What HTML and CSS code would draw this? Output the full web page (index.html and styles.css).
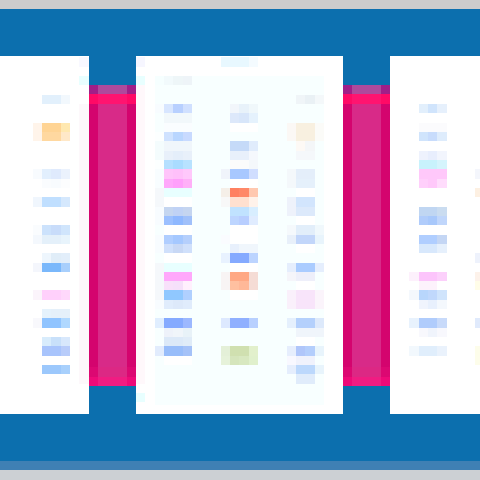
FILE: index.html
```html
<!DOCTYPE html>
<html lang="en">
<head>
    <meta charset="UTF-8">
    <title>Sheets</title>
    <link rel="stylesheet" href="styles.css">
    <script src="sheets.js"></script>
</head>
<body>
    <div class="top-bar"></div>
    <div class="stage">
        <div class="panel panel-left" data-panel="left"></div>

        <div class="gutter">
            <div class="stripe stripe-purple"></div>
            <div class="stripe stripe-hot"></div>
            <div class="stripe stripe-magenta"></div>
            <div class="stripe stripe-fade"></div>
            <div class="stripe stripe-pink"></div>
        </div>

        <div class="panel panel-center" data-panel="center"></div>

        <div class="gutter gutter-right">
            <div class="stripe stripe-purple"></div>
            <div class="stripe stripe-hot"></div>
            <div class="stripe stripe-magenta"></div>
            <div class="stripe stripe-fade"></div>
            <div class="stripe stripe-pink"></div>
        </div>

        <div class="panel panel-right" data-panel="right"></div>
    </div>
    <div class="bottom-line"></div>
    <div class="bottom-bar"></div>
</body>
</html>
```

FILE: styles.css
```css
:root {
    --cell: 9.333px;
    --blue: #0c6fae;
}
html, body {
    height: 100%;
}
body {
    margin: 0;
    display: flex;
    flex-direction: column;
    overflow: hidden;
    background-color: var(--blue);
}

.top-bar {
    height: var(--cell);
    background-color: #cccccc;
}
.bottom-line {
    height: var(--cell);
    background-color: #3f80b4;
}
.bottom-bar {
    height: 10px;
    background-color: #ccd0d4;
}

.stage {
    flex: 1;
    display: flex;
    padding: 46.667px 0 46.667px;
    min-height: 0;
}

.panel {
    display: flex;
    flex-shrink: 0;
    padding-top: 1.3px;
    background-color: #ffffff;
    overflow: hidden;
}
.panel-left {
    width: 88.7px;
    padding-left: 32.7px;
    box-sizing: border-box;
}
.panel-center {
    width: 207.3px;
    box-sizing: border-box;
}
.panel-right {
    flex: 1;
    padding-left: 19.3px;
    box-sizing: border-box;
}

.column {
    display: grid;
    grid-template-columns: repeat(4, var(--cell));
    grid-auto-rows: var(--cell);
    flex-shrink: 0;
}
.column-edge {
    grid-template-columns: var(--cell);
}
.panel-left .column-edge {
    margin-left: auto;
}
.panel-right .column-edge {
    margin-left: 28.3px;
}

.sheet-wrap {
    margin-left: var(--cell);
}
.sheet-head {
    padding-left: 66px;
    height: calc(var(--cell) * 2);
}
.sheet {
    display: flex;
    gap: 28.667px;
    width: 169.333px;
    height: 329px;
    background-color: #f8ffff;
}

.gutter {
    flex: 0 0 47.3px;
    display: flex;
    flex-direction: column;
    padding: 28.9px 0 28px;
}
.gutter-right {
    flex: 0 0 46.7px;
}

.stripe {
    --side: #d4046e;
    --mid: #d82a88;
    height: var(--cell);
    background: linear-gradient(90deg,
        var(--side) var(--cell),
        var(--mid) var(--cell),
        var(--mid) calc(100% - var(--cell)),
        var(--side) calc(100% - var(--cell)));
}
.stripe-purple {
    --side: #a01f88;
    --mid: #ae4a9c;
}
.stripe-hot {
    --side: #ff0a66;
    --mid: #ff1470;
}
.stripe-magenta {
    flex: 1;
}
.stripe-fade {
    --side: #dc0872;
    --mid: #dc2884;
}
.stripe-pink {
    --side: #ee0a78;
    --mid: #f01c82;
}
```

FILE: sheets.js
```js
// rows are keyed from the first row under the panel top, cells are hex colours, "." is blank
const FIRST_ROW = -5;
const LAST_ROW = 31;

const SHEETS = {
    left: {
        columns: [{
            '-1': '. e2f0fc e2f0fc f2f8fd',
            2: 'fff4ea ffd494 ffd494 ffe8b0',
            3: 'fff4ea ffd8a0 ffd8a0 ffe8c8',
            7: 'f8fbfe e2effd dfeafd ebf2fd',
            8: '. fafcfe f8fbfe fcfdfe',
            10: 'f0f6fd c0dfff c0dfff d5e8fd',
            13: 'fafcfe cce2fc c8dcfa d0e5fc',
            14: 'f4f8fd e4f0fa e4f0fa e8f4fc',
            16: '. eef6fd e0edf8 e2eefa',
            17: 'f4f6fc 7ab8fb 7ab8fb a8cffc',
            20: 'fbf4fb ffd0fb ffd0fb ffd8fb',
            22: '. e5f2fc e5f0fa e5f0fa',
            23: 'f8f8fc 90c4ff 90c4ff b0d8ff',
            25: '. d8ecfc c8e0fa d8e8fc',
            26: '. a8c4fc a8c4fc b8ccfa',
            28: '. 9cc8fc 9cc8fc a8d0fc',
        }],
    },
    center: {
        edge: {
            '-5': 'f6f6ff', '-3': 'e8ffff', 31: 'e8ffff',
        },
        head: { '-5': 'e8f8ff e8f8ff e8f8ff f4fbff' },
        columns: [{
            '-3': 'f6ffff f2fafc eef6f8 eef4f8',
            0: 'f8fcff d8e6ff b8d0ff d0e0ff',
            1: '. f2f8fb f2f8fb f2f8fb',
            2: '. fafdff fafdff fafdff',
            3: 'fcffff cfe2ff b9d6ff c8daff',
            4: 'f4fcfd f0f6fb f0f6fb f0f6fb',
            5: 'f4fcfd e8f0fa e4eefa e8f0fa',
            6: 'fcffff b5e0ff aadcff b8e2ff',
            7: 'f8fdff ffc4fa ffc0fa ffc8fb',
            8: 'f8fdff ffa8fb ffa0fb ffb0f8',
            9: 'f5f8fb e8ffff e8ffff e8ffff',
            10: 'f5f8fb ffffff ffffff ffffff',
            11: 'f8fcff c5d6f0 c0d2f5 c5d5f0',
            12: 'f8fcff 9cc0ff 8fb8ff a0c0fa',
            13: '. ffffff ffffff ffffff',
            14: 'f8fcff b0ceff a5c8ff b5cffc',
            15: 'f8fcff d0e0fb c8d8f5 d0e0fb',
            16: '. ffffff ffffff ffffff',
            17: 'f5f8fb e8ffff e8ffff e8ffff',
            18: 'f5f8fb ffa8fb ffa8fb ffa8fb',
            19: 'f5f8fb f8e0fa f5e0fa fff0fd',
            20: 'f5f8fb 90c8ff 90c8ff b0d0ff',
            21: 'f8fcff e0ecfc dde9fa e0ecfc',
            23: 'e0eeff 85aaff 85aaff 9cb8ff',
            24: '. eef2fa f0f5fa e8f2f8',
            25: '. dce9f8 dce9f8 e0ecf8',
            26: 'e2ecfd 98bdfa 98bdfa a5c2f8',
            27: '. ffffff ffffff ffffff',
        }, {
            0: '. f2f6fb e8f2fa f0f8fb',
            1: '. dde8fa d8e6fa e5f2fd',
            2: '. ffffff ffffff ffffff',
            4: '. c5daf8 c5daf8 e0ecfc',
            5: '. e8f0fb e8f0fb f5f8fd',
            6: '. fbfbfb fbfbfb f4f8fb',
            7: 'f0f4fb a8c8ff a8c8ff d0deff',
            8: '. ffffff ffffff ffffff',
            9: 'f5efe8 ff8060 ff8868 ffc8b0',
            10: 'f8f8f8 ffe0d0 ffe0d0 fff2ea',
            11: '. c0e2ff c0e2ff d8eeff',
            12: '. bdd5ff b8ceff e0ecff',
            13: '. ffffff ffffff ffffff',
            14: 'fafcff ffffff ffffff ffffff',
            15: '. e8f0fc f0f6fc f0f6fc',
            16: 'e8f2ff 85aaff 85aaff bcd4ff',
            17: '. ffffff ffffff ffffff',
            18: 'f8f4f4 ffa884 ffa884 f5dcd5',
            19: 'f8f4f4 ffc0a0 ffb898 f5dcd5',
            20: '. ffffff ffffff ffffff',
            23: 'dde9ff 90b0ff 90b0ff b8d0ff',
            26: 'e4f0d8 d0e0b0 d0e0b0 e2f0cc',
            27: 'e6f2da d5e5bc d8e8c0 e0f0cc',
        }, {
            '-1': '. f0f5f8 eaf1f5 f4f8fa',
            2: 'fbf8f5 f8f0e0 f8f0e0 fbfbf8',
            3: 'fbf8f5 f8f0e0 f8f0e0 fbfbf8',
            4: '. fdf9f5 f4f6f8 .',
            5: '. f5f8fb f5f8fb .',
            7: 'f4f8fb e4eefa e4eefa .',
            8: 'f4f8fb e5f0fb e5f0fb .',
            9: '. ffffff ffffff .',
            10: 'eef2fb d2e5fd d2e5fd .',
            11: 'eef2fb dce9fb dce9fb .',
            12: '. ffffff ffffff .',
            13: 'f5f9fc e2eefa e2eefa f0f8fc',
            14: 'e8f0fa c2d6fa c2d6fa e8f4fc',
            15: '. ffffff ffffff .',
            17: 'e5eefd aaccff aaccff e5eefd',
            18: 'f5f5fa eeeffa eeeffa .',
            19: '. ffffff ffffff .',
            20: 'faf0fb f8e4fa f8e4fa fbf4fb',
            21: 'faf0fb f8e4fa f8e4fa fbf4fb',
            23: 'e5f0fd b4d0fc b4d0fc dde9fb',
            24: '. f0f5fb f0f5fb f0f5fb',
            25: '. ffffff ffffff .',
            26: 'e6eefd b0c6fa b4cefc e8f4fc',
            27: 'f8f8ff f0f2fc f0f2fc .',
            28: 'e5eefd bcd8fc bcd8fc e8f4fc',
            29: '. e0ecfb e0ecfb .',
        }],
    },
    right: {
        columns: [{
            0: '. e2effc d0e4fc e6f0fc',
            2: '. fbfbfd fbfbfd fbfbfd',
            3: '. d0e4fc c8dcfc deecfc',
            5: '. eef2fd e8eefd f2f5fd',
            6: '. c8f2fc c8f2fc d5f4fc',
            7: '. ffc8fa ffc8fa ffc8fa',
            8: '. ffcffb ffc8fa ffdcfc',
            11: '. c0d6f2 c0d6f2 cadcf0',
            12: '. b0ccfb a8c8fb c0d6fb',
            14: '. b0ceff b0ceff c4d6f4',
            15: '. d8e8fc d8e8fc e6f0fc',
            18: 'fdf0fc fcc4fb fcc4fb fcd0fb',
            19: '. fdf2fc fdf2fc .',
            20: 'f4f8fd b8d6fc c0d8fc d0e4fc',
            21: '. f0f4fd e8f0fd f4f8fd',
            23: 'e8f2fd b0ccfc b0ccfc c8dafa',
            24: '. f8f8fd f0f4fc f8f8fd',
            26: 'f2f8fd e0eefc e0eefc eaf2fc',
        }],
        extra: {
            7: 'f4f6fc', 9: 'fdf0e2', 16: 'eef2fc', 18: 'fdf2ea', 19: 'fffde8',
            23: 'e0eafc', 26: 'fdfdea', 27: 'fdfdea',
        },
    },
};

const buildColumn = (rows, width, first = FIRST_ROW, last = LAST_ROW) => {
    const column = document.createElement('div');
    column.className = width === 1 ? 'column column-edge' : 'column';
    for (let r = first; r <= last; r++) {
        const cells = rows[r] ? rows[r].split(' ') : [];
        for (let i = 0; i < width; i++) {
            const cell = document.createElement('i');
            if (cells[i] && cells[i] !== '.') {
                cell.style.backgroundColor = '#' + cells[i];
            }
            column.appendChild(cell);
        }
    }
    return column;
};

document.addEventListener('DOMContentLoaded', () => {
    const left = document.querySelector('[data-panel="left"]');
    left.appendChild(buildColumn(SHEETS.left.columns[0], 4));
    const leftEdge = {};
    for (let r = 0; r <= 29; r++) leftEdge[r] = 'fdf8fb';
    leftEdge[-5] = 'f8f8ff';
    leftEdge[-3] = 'e8ffff';
    left.appendChild(buildColumn(leftEdge, 1));

    const center = document.querySelector('[data-panel="center"]');
    const centerEdge = { ...SHEETS.center.edge };
    for (let r = -2; r <= 29; r++) centerEdge[r] = 'fff8fb';
    center.appendChild(buildColumn(centerEdge, 1));

    const wrap = document.createElement('div');
    wrap.className = 'sheet-wrap';
    const head = document.createElement('div');
    head.className = 'sheet-head';
    head.appendChild(buildColumn(SHEETS.center.head, 4, -5, -5));
    wrap.appendChild(head);
    const sheet = document.createElement('div');
    sheet.className = 'sheet';
    SHEETS.center.columns.forEach(rows => sheet.appendChild(buildColumn(rows, 4, -3, 31)));
    wrap.appendChild(sheet);
    center.appendChild(wrap);

    const right = document.querySelector('[data-panel="right"]');
    right.appendChild(buildColumn(SHEETS.right.columns[0], 4));
    right.appendChild(buildColumn(SHEETS.right.extra, 1));
});
```
